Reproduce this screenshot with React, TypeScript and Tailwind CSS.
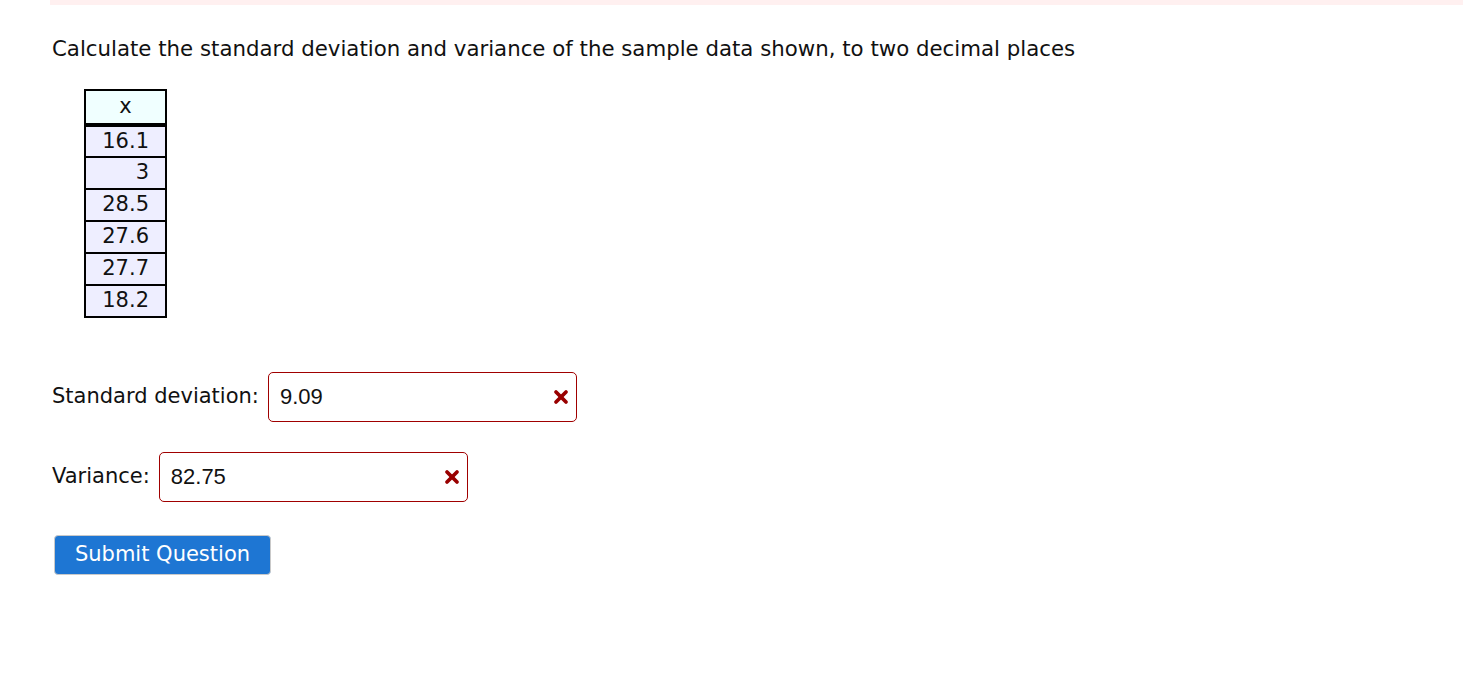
import { X } from 'lucide-react';

const values = ['16.1', '3', '28.5', '27.6', '27.7', '18.2'];

function AnswerField({ label, value }: { label: string; value: string }) {
  return (
    <div className="flex items-center gap-[9px]">
      <span className="text-[21px] text-[#111]">{label}</span>
      <div className="flex h-[50px] w-[309px] items-center rounded-[5px] border border-[#a00000] bg-white pl-[11px] pr-[5px]">
        <span className="flex-1 font-['Liberation_Sans',Arial,sans-serif] text-[22px] text-[#111]">{value}</span>
        <X className="h-[20px] w-[20px] text-[#990000]" strokeWidth={4.5} />
      </div>
    </div>
  );
}

export default function App() {
  return (
    <div className="min-h-[686px] bg-white font-['DejaVu_Sans','Open_Sans',sans-serif] text-[#111]">
      <div className="ml-[50px] h-[5px] bg-[#fff0f0]" />
      <div className="pl-[52px] pt-[29px]">
        <p className="text-[21.3px] leading-[30px]">
          Calculate the standard deviation and variance of the sample data shown, to two decimal places
        </p>

        <table className="mt-[25px] ml-[32px] border-collapse text-[21px]">
          <thead>
            <tr>
              <th className="h-[33px] w-[81px] border-2 border-b-[4px] border-black bg-[#f0ffff] text-center font-normal">x</th>
            </tr>
          </thead>
          <tbody>
            {values.map((v) => (
              <tr key={v}>
                <td className="h-[32px] border-2 border-black bg-[#eeeeff] pr-[16px] text-right leading-none">{v}</td>
              </tr>
            ))}
          </tbody>
        </table>

        <div className="mt-[54px] flex flex-col gap-[30px]">
          <AnswerField label="Standard deviation:" value="9.09" />
          <AnswerField label="Variance:" value="82.75" />
        </div>

        <button className="mt-[33px] ml-[2px] h-[40px] w-[217px] rounded-[4px] border border-[#c9c9c9] bg-[#1e76d3] text-[21px] text-white">
          Submit Question
        </button>
      </div>
    </div>
  );
}
